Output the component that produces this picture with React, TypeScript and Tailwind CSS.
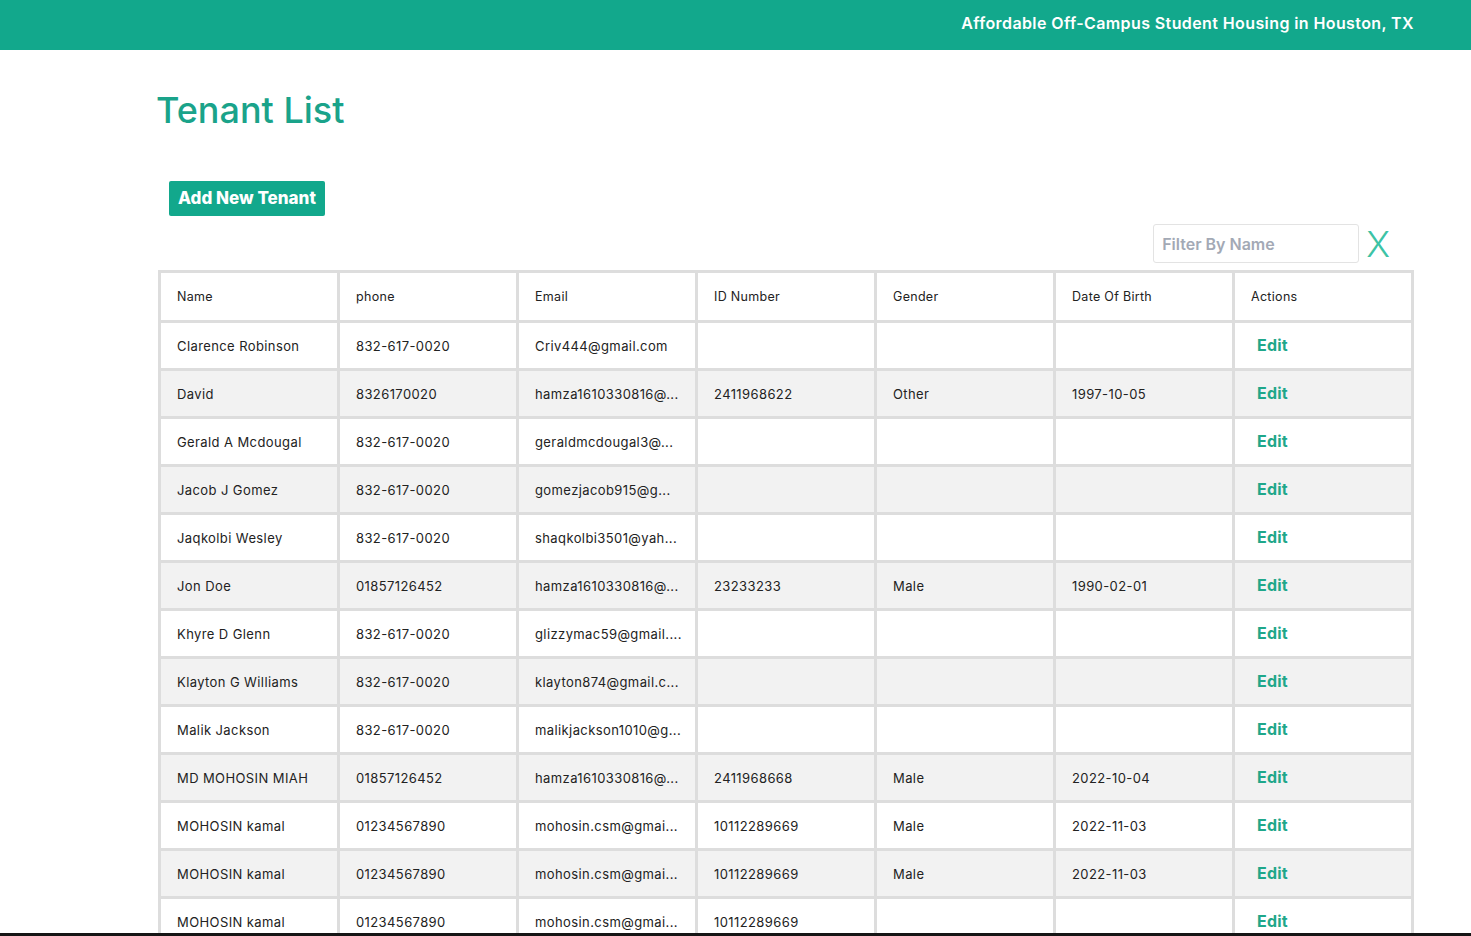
import React from "react";

type Row = {
  name: string;
  phone: string;
  email: string;
  id: string;
  gender: string;
  dob: string;
};

const rows: Row[] = [
  { name: "Clarence Robinson", phone: "832-617-0020", email: "Criv444@gmail.com", id: "", gender: "", dob: "" },
  { name: "David", phone: "8326170020", email: "hamza1610330816@...", id: "2411968622", gender: "Other", dob: "1997-10-05" },
  { name: "Gerald A Mcdougal", phone: "832-617-0020", email: "geraldmcdougal3@...", id: "", gender: "", dob: "" },
  { name: "Jacob J Gomez", phone: "832-617-0020", email: "gomezjacob915@g...", id: "", gender: "", dob: "" },
  { name: "Jaqkolbi Wesley", phone: "832-617-0020", email: "shaqkolbi3501@yah...", id: "", gender: "", dob: "" },
  { name: "Jon Doe", phone: "01857126452", email: "hamza1610330816@...", id: "23233233", gender: "Male", dob: "1990-02-01" },
  { name: "Khyre D Glenn", phone: "832-617-0020", email: "glizzymac59@gmail....", id: "", gender: "", dob: "" },
  { name: "Klayton G Williams", phone: "832-617-0020", email: "klayton874@gmail.c...", id: "", gender: "", dob: "" },
  { name: "Malik Jackson", phone: "832-617-0020", email: "malikjackson1010@g...", id: "", gender: "", dob: "" },
  { name: "MD MOHOSIN MIAH", phone: "01857126452", email: "hamza1610330816@...", id: "2411968668", gender: "Male", dob: "2022-10-04" },
  { name: "MOHOSIN kamal", phone: "01234567890", email: "mohosin.csm@gmai...", id: "10112289669", gender: "Male", dob: "2022-11-03" },
  { name: "MOHOSIN kamal", phone: "01234567890", email: "mohosin.csm@gmai...", id: "10112289669", gender: "Male", dob: "2022-11-03" },
  { name: "MOHOSIN kamal", phone: "01234567890", email: "mohosin.csm@gmai...", id: "10112289669", gender: "", dob: "" },
];

const headers = ["Name", "phone", "Email", "ID Number", "Gender", "Date Of Birth", "Actions"];

export default function App() {
  return (
    <div
      className="min-h-screen bg-white text-[#222]"
      style={{ fontFamily: "Inter, 'Open Sans', sans-serif" }}
    >
      <header className="h-[50px] bg-[#12a88c] flex items-center justify-end pr-[57px] pb-[4px]">
        <span className="text-white text-[16px] font-semibold tracking-[0.4px]">
          Affordable Off-Campus Student Housing in Houston, TX
        </span>
      </header>

      <main className="pl-[158px] pr-[57px]">
        <h1 className="mt-[38px] -ml-[2px] text-[36px] leading-[44px] font-medium text-[#1aa38a] tracking-[0px]">
          Tenant List
        </h1>

        <div className="mt-[49px] pl-[11px]">
          <button className="h-[35px] w-[156px] rounded-[2px] bg-[#12a88c] text-white text-[17px] font-extrabold tracking-[0px]">
            Add New Tenant
          </button>
        </div>

        <div className="mt-[8px] flex items-center justify-end pr-[24px]">
          <input
            placeholder="Filter By Name"
            className="h-[39px] w-[206px] rounded-[3px] border border-[#e3e3e3] px-[8px] text-[16px] font-semibold text-[#555] placeholder:text-[#a3a9b5] outline-none"
          />
          <span className="ml-[7px] text-[36px] leading-none font-light text-[#3cc3a5]">X</span>
        </div>

        <table className="mt-[7px] table-fixed border-separate border-spacing-[3px] bg-[#dddddd] w-[1256px] text-[13px] tracking-[0.4px]">
          <thead>
            <tr>
              {headers.map((h) => (
                <th
                  key={h}
                  className="h-[47px] w-[176px] bg-white px-[16px] pt-[2px] text-left font-normal text-[12.5px] tracking-[0.3px] text-[#222]"
                >
                  {h}
                </th>
              ))}
            </tr>
          </thead>
          <tbody>
            {rows.map((r, i) => {
              const bg = i % 2 === 1 ? "bg-[#f2f2f2]" : "bg-white";
              const cells = [r.name, r.phone, r.email, r.id, r.gender, r.dob];
              return (
                <tr key={i}>
                  {cells.map((c, j) => (
                    <td
                      key={j}
                      className={`${bg} h-[45px] px-[16px] pt-[2px] whitespace-nowrap overflow-hidden text-[#222]`}
                    >
                      {c}
                    </td>
                  ))}
                  <td className={`${bg} h-[45px] pl-[22px]`}>
                    <a className="text-[16px] font-bold tracking-[0.2px] text-[#1fa78a] relative top-[-1px]">Edit</a>
                  </td>
                </tr>
              );
            })}
          </tbody>
        </table>
      </main>

      <div className="fixed bottom-0 left-0 right-0 h-[3px] bg-[#151515]" />
    </div>
  );
}
